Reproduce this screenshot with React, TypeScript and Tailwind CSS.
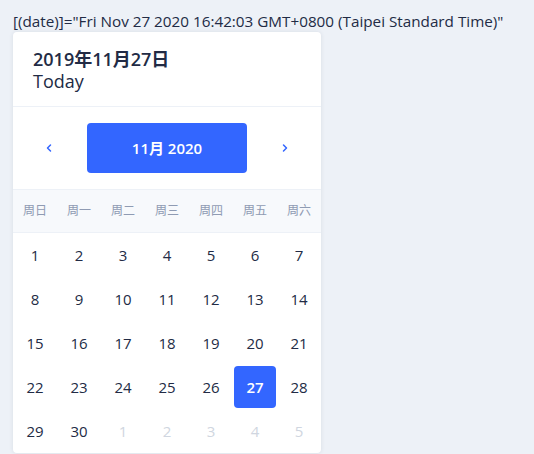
import { ChevronLeft, ChevronRight } from 'lucide-react';

const weekdays = ['周日', '周一', '周二', '周三', '周四', '周五', '周六'];

const days: { d: number; muted?: boolean }[] = [
  ...Array.from({ length: 30 }, (_, i) => ({ d: i + 1 })),
  ...Array.from({ length: 5 }, (_, i) => ({ d: i + 1, muted: true })),
];

export default function App() {
  return (
    <div
      className="min-h-screen bg-[#edf1f7] px-[13px] pt-[10px] text-[#222b45]"
      style={{ fontFamily: '"Open Sans", "Noto Sans CJK TC", sans-serif' }}
    >
      <div className="text-[15.25px] leading-[22px] whitespace-nowrap">
        [(date)]="Fri Nov 27 2020 16:42:03 GMT+0800 (Taipei Standard Time)"
      </div>
      {/* Calendar card */}
      <div className="w-[308px] bg-white rounded-[4px] shadow-[0_0_4px_rgba(44,51,73,0.1)] overflow-hidden">
        {/* Header */}
        <div className="px-5 pt-[16px] pb-[14px] border-b border-[#edf1f7]">
          <div className="text-[18px] leading-[22px] font-semibold">2019年11月27日</div>
          <div className="text-[18px] leading-[22px]">Today</div>
        </div>
        {/* Nav */}
        <div className="flex items-center justify-between px-[30px] h-[82px]">
          <button className="text-[#3366ff]">
            <ChevronLeft className="w-[12px] h-[12px]" strokeWidth={3} />
          </button>
          <button className="w-[160px] h-[50px] rounded-[4px] bg-[#3366ff] text-white text-[15px] font-semibold">
            11月 2020
          </button>
          <button className="text-[#3366ff]">
            <ChevronRight className="w-[12px] h-[12px]" strokeWidth={3} />
          </button>
        </div>
        {/* Weekdays */}
        <div className="grid grid-cols-7 h-[44px] items-center bg-[#f7f9fc] border-y border-[#edf1f7]">
          {weekdays.map((w) => (
            <div key={w} className="text-center text-[12px] text-[#8f9bb3]">
              {w}
            </div>
          ))}
        </div>
        {/* Days */}
        <div className="grid grid-cols-7">
          {days.map((x, i) => (
            <div key={i} className="h-[44px] flex items-center justify-center">
              <div
                className={`w-[42px] h-[42px] flex items-center justify-center rounded-[4px] text-[15px] ${
                  !x.muted && x.d === 27
                    ? 'bg-[#3366ff] text-white font-semibold'
                    : x.muted
                    ? 'text-[#d0d6e0]'
                    : 'text-[#222b45]'
                }`}
              >
                {x.d}
              </div>
            </div>
          ))}
        </div>
      </div>
    </div>
  );
}
